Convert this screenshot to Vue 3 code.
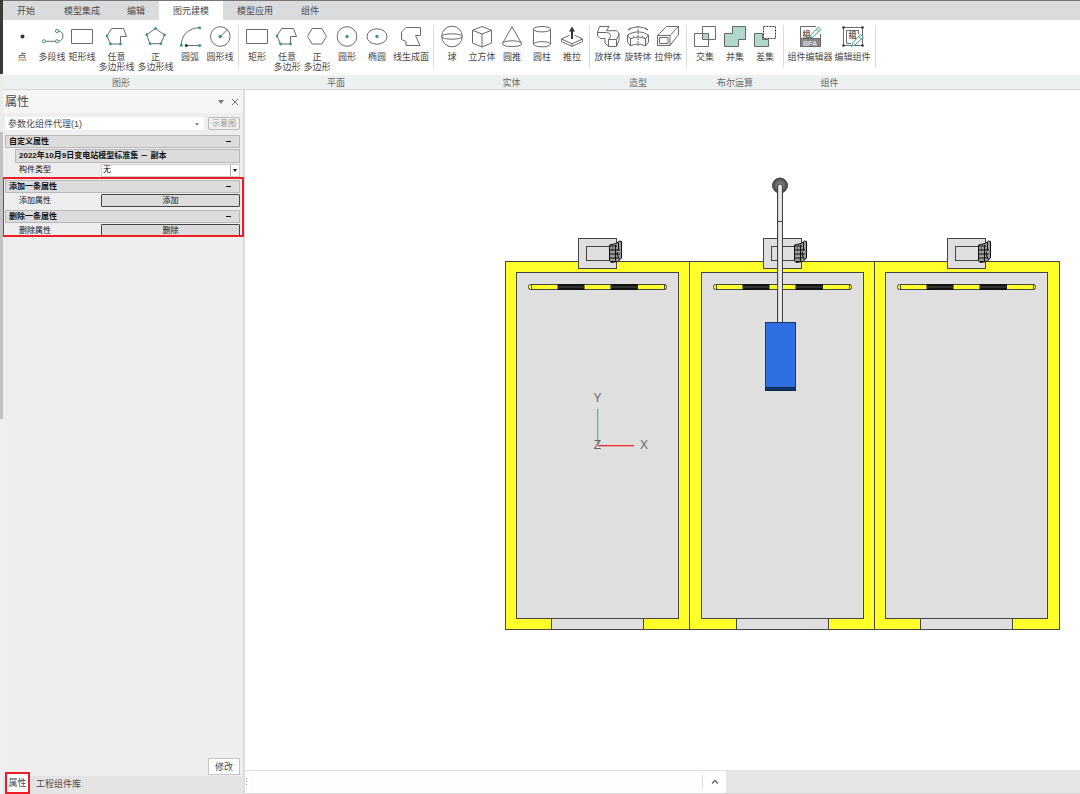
<script setup>
import { ref } from 'vue'

const menus = ['开始', '模型集成', '编辑', '图元建模', '模型应用', '组件']
const activeMenu = ref('图元建模')

const anyPolygon =
  '<path d="M2 11 6.5 3.5H18.5L21.5 11.5H15.5V19H5.5Z"/><g class="dot"><circle cx="2" cy="11" r="1.4"/><circle cx="5.5" cy="19" r="1.4"/><circle cx="15.5" cy="19" r="1.4"/></g>'
const rectangle = '<path d="M1.5 4.5H22.5V18.5H1.5Z"/>'

const groups = [
  {
    name: '图形',
    tools: [
      { label: ['点'], icon: '<circle class="ink" cx="12.5" cy="11.5" r="2"/>' },
      {
        label: ['多段线'],
        icon: '<path d="M5.5 16.3H15.5M18.5 6C24.5 6.5 24.5 15.5 18.5 16.3"/><g class="ring"><circle cx="4" cy="16.3" r="1.6"/><circle cx="17" cy="16.3" r="1.6"/><circle cx="17" cy="6" r="1.6"/></g>'
      },
      { label: ['矩形线'], icon: rectangle },
      { label: ['任意', '多边形线'], size: 'wide', icon: anyPolygon },
      {
        label: ['正', '多边形线'],
        size: 'wide',
        icon: '<path d="M11.5 3.5 20.5 10 16.8 18.7H6L2.7 9.7Z"/><g class="dot"><circle cx="11.5" cy="3.5" r="1.4"/><circle cx="20.5" cy="10" r="1.4"/><circle cx="16.8" cy="18.7" r="1.4"/><circle cx="6" cy="18.7" r="1.4"/><circle cx="2.7" cy="9.7" r="1.4"/></g>'
      },
      {
        label: ['圆弧'],
        icon: '<path d="M3.3 20.3C3.3 10 11 2.7 21.7 2.7M8.3 20.5H21.7"/><g class="dot"><circle cx="3.3" cy="20.3" r="1.5"/><circle cx="21.7" cy="2.7" r="1.5"/><circle cx="21.7" cy="20.5" r="1.5"/></g><circle class="ink" cx="8.3" cy="20.5" r="1.5"/>'
      },
      {
        label: ['圆形线'],
        icon: '<circle cx="12.3" cy="11.5" r="9.8"/><path d="M12.3 11.5 19.3 4.5"/><circle class="dot" cx="12.3" cy="11.5" r="1.8"/>'
      }
    ]
  },
  {
    name: '平面',
    tools: [
      { label: ['矩形'], icon: rectangle },
      { label: ['任意', '多边形'], icon: anyPolygon },
      { label: ['正', '多边形'], icon: '<path d="M2.5 11.5 7.2 3.5H16.8L21.5 11.5 16.8 19H7.2Z"/>' },
      { label: ['圆形'], icon: '<circle cx="12" cy="11.5" r="9.8"/><circle class="dot" cx="12" cy="11.5" r="1.7"/>' },
      { label: ['椭圆'], icon: '<ellipse cx="12" cy="11.5" rx="10" ry="7.7"/><circle class="dot" cx="12" cy="11.5" r="1.7"/>' },
      {
        label: ['线生成面'],
        size: 'medium',
        icon: '<path d="M2.5 7 7 2.5H21.5V10.5H16.5L21 20.5H7V16.5L2.5 14.5Z"/>'
      }
    ]
  },
  {
    name: '实体',
    snug: true,
    tools: [
      { label: ['球'], icon: '<circle cx="12" cy="11.5" r="10.3"/><ellipse cx="12" cy="11.5" rx="10.3" ry="2.7"/>' },
      { label: ['立方体'], icon: '<path d="M12 1.5 21.5 5.3V18L12 22 2.5 18V5.3ZM2.5 5.3 12 9 21.5 5.3M12 9V22"/>' },
      { label: ['圆推'], icon: '<path d="M2.5 18.5 12 1.7 21.5 18.5"/><ellipse cx="12" cy="18.7" rx="9.7" ry="2.9"/>' },
      {
        label: ['圆柱'],
        icon: '<ellipse cx="12" cy="4.2" rx="8.5" ry="2.7"/><path d="M3.5 4.2V19.2C4.5 22.7 19.5 22.7 20.5 19.2V4.2"/><path d="M3.5 19.2C4.5 15.8 19.5 15.8 20.5 19.2"/>'
      },
      {
        label: ['推拉'],
        icon: '<path d="M9.5 10.2 1.5 14 12 18.7 22.5 14 14.5 10.2M1.5 14V16.5L12 21.3 22.5 16.5V14M12 18.7V21.3"/><path class="bold" d="M12 14V4"/><path class="ink" d="M9 6.5 12 1.5 15 6.5Z"/>'
      }
    ]
  },
  {
    name: '造型',
    tools: [
      {
        label: ['放样体'],
        icon: '<path d="M3.5 1.5H13L10.5 5.7H20.5L23 8V15.5L20.5 21.5H12.5L9 18V13.5H4L1.5 11V7.5ZM1.5 7.5H10.5Q14.500 8 14.500 10.500T12.500 14.500V21.500M12.500 14.500H20.500V21.500M20.500 14.500 23 9"/>'
      },
      {
        label: ['旋转体'],
        icon: '<path d="M2 5Q12-1.5 22 5M19.5 2.5 22 5M4.5 2.5 2 5M1.5 10Q12 3.5 22.5 10L19.5 14Q12 10 4.5 14ZM1.5 10V17L4.5 21Q12 17 19.5 21L22.5 17V10M4.5 14V21M19.5 14V21"/><path class="dash" d="M12 1V22M4.5 14 8 11M19.5 14 16 11"/>'
      },
      {
        label: ['拉伸体'],
        icon: '<path d="M1.5 10.5 10.5 1.5H22.5V9.5L14 20.5H1.5ZM1.5 10.5H14V20.5M14 10.5 22.5 1.5M3.5 12.5H12V18.5H3.5Z"/>'
      }
    ]
  },
  {
    name: '布尔运算',
    tools: [
      { label: ['交集'], icon: '<path class="mint" d="M9.5 8.5H15.5V14.5H9.5Z"/><path d="M1.5 8.5H15.5V21.5H1.5ZM9.5 1.5H22.5V14.5H9.5Z"/>' },
      { label: ['并集'], icon: '<path class="mint line" d="M9.5 1.5H22.5V14.5H15.5V21.5H1.5V8.5H9.5Z"/>' },
      { label: ['差集'], icon: '<path class="mint line" d="M1.5 8.5H9.5V14.5H15.5V21.5H1.5Z"/><path class="dotted" d="M10.5 1.5H22.5V13.5H10.5Z"/>' }
    ]
  },
  {
    name: '组件',
    tools: [
      {
        label: ['组件编辑器'],
        size: 'widest',
        icon: '<path d="M18 1.5H2.5V21.5H22.5V9"/><path class="slab" d="M2.5 13.5H22.5V21.5H2.5Z"/><text class="zh" x="4.5" y="12">组</text><text class="bfa" x="5" y="20.5">BFA</text><path class="pen" d="M20.5 2 23 4.5 15 12 12 13 13 9.8ZM18.5 4 21 6.5"/>'
      },
      {
        label: ['编辑组件'],
        size: 'wide',
        icon: '<path d="M2.5 2.5H21.5V20.5H2.5ZM5.5 5.5H17.5V9M10 18.5H5.5V5.5"/><g class="ink"><circle cx="2.5" cy="2.5" r="1.3"/><circle cx="21.5" cy="2.5" r="1.3"/><circle cx="2.5" cy="20.5" r="1.3"/><circle cx="21.5" cy="20.5" r="1.3"/></g><text class="zh" x="7.5" y="13">组</text><path class="pen" d="M19.5 9.5 22.5 12 14 20 10.5 21.5 12 17.5ZM17.5 11.5 20.5 14"/>'
      }
    ]
  }
]

const bays = [0, 185, 369]
const command = ref('')
</script>

<template>
  <div class="app">
    <div class="edge"></div>
    <header class="ribbon">
      <nav class="menu">
        <button v-for="m in menus" :key="m" type="button" :class="{ active: m === activeMenu }" @click="activeMenu = m">{{ m }}</button>
      </nav>
      <div class="groups">
        <section v-for="g in groups" :key="g.name" class="group" :class="{ snug: g.snug }">
          <div class="tools">
            <button v-for="t in g.tools" :key="t.label.join('')" type="button" class="tool" :class="t.size">
              <svg width="24" height="24" viewBox="0 0 24 24" aria-hidden="true"><g v-html="t.icon"></g></svg>
              <span v-for="l in t.label" :key="l">{{ l }}</span>
            </button>
          </div>
          <h2>{{ g.name }}</h2>
        </section>
      </div>
    </header>

    <main class="work">
      <aside class="panel">
        <div class="title">
          <h1>属性</h1>
          <button type="button" aria-label="选项"><svg width="8" height="6" viewBox="0 0 8 6"><path d="M1 1H7L4 5Z" fill="#777" /></svg></button>
          <button type="button" aria-label="关闭"><svg width="8" height="8" viewBox="0 0 8 8"><path d="M1 1 7 7M7 1 1 7" stroke="#777" fill="none" /></svg></button>
        </div>

        <div class="picker">
          <div class="select">
            <select aria-label="对象"><option>参数化组件代理(1)</option></select>
            <svg width="6" height="4" viewBox="0 0 6 4"><path d="M1 0H5L3 3Z" fill="#888" /></svg>
          </div>
          <button type="button" disabled>示意图</button>
        </div>

        <div class="props">
          <h3>自定义属性<i></i></h3>
          <h4>2022年10月9日变电站模型标准集 － 副本</h4>
          <div class="row">
            <label for="kind">构件类型</label>
            <div class="select boxed">
              <select id="kind"><option>无</option></select>
              <svg width="6" height="4" viewBox="0 0 6 4"><path d="M1 0H5L3 3Z" fill="#111" /></svg>
            </div>
          </div>
          <div class="marked">
            <h3>添加一条属性<i></i></h3>
            <div class="row">
              <label for="add">添加属性</label>
              <button id="add" type="button">添加</button>
            </div>
            <h3>删除一条属性<i></i></h3>
            <div class="row">
              <label for="del">删除属性</label>
              <button id="del" type="button">删除</button>
            </div>
          </div>
        </div>

        <div class="apply"><button type="button">修改</button></div>
        <nav class="docks">
          <button type="button" class="active">属性</button>
          <button type="button">工程组件库</button>
        </nav>
      </aside>

      <section class="stage">
        <svg class="scene" viewBox="245 90 835 680" preserveAspectRatio="xMidYMin meet" role="img" aria-label="模型俯视图">
          <defs>
            <linearGradient id="pole"><stop offset="0" stop-color="#bbb" /><stop offset=".5" stop-color="#f4f4f4" /><stop offset="1" stop-color="#ccc" /></linearGradient>
            <radialGradient id="ball"><stop offset="0" stop-color="#999" /><stop offset="1" stop-color="#444" /></radialGradient>
          </defs>
          <g class="solid">
            <rect class="yellow" x="505.5" y="261.5" width="554" height="368" />
            <path d="M689.5 261V629M874.5 261V629" />
            <g v-for="dx in bays" :key="dx" :transform="`translate(${dx} 0)`">
              <rect class="grey" x="516.5" y="272.5" width="162" height="346" />
              <rect class="grey" x="551.5" y="618.5" width="92" height="11" />
              <rect class="yellow" x="528.5" y="284.5" width="138" height="5" rx="2" />
              <path class="black" d="M558 284.5H584V289.5H558ZM611 284.5H637.5V289.5H611Z" />
              <path class="shine" d="M558 287H584M611 287H637.5" />
              <path d="M531.5 284V290M664.5 284V290" />
              <rect class="grey" x="578.5" y="238.5" width="38" height="30" />
              <rect class="grey" x="586.5" y="246.5" width="23" height="14" />
              <path class="steel" d="M609.5 245 616 243.5 619.5 241 621.5 241.5V258L618 261.5 611 262.5 609.5 260.5Z" />
              <path class="gear" d="M610 246H617M609 250H620M609 254H620M610 258H618M612.5 247V250M615.5 245V261M618.5 242.5V249L617 254 619.5 260M611 261.5H616" />
              <path class="glint" d="M610.5 248H614M617 251.5H619.5M611 256.5H614M620 244V247M617 259.5H618.5" />
            </g>
            <circle cx="780" cy="185.5" r="7.5" fill="url(#ball)" />
            <path d="M777.5 323V187Q777.5 184 780 184Q782.5 184 782.5 187V323Z" fill="url(#pole)" />
            <path d="M777.5 221.5H782.5" />
            <rect class="blue" x="765.5" y="322.5" width="30" height="68" />
            <rect class="navy" x="765.5" y="387.5" width="30" height="3" />
          </g>
          <rect class="axis-y" x="597" y="409" width="1.3" height="36" />
          <rect class="axis-x" x="598" y="445" width="36" height="1.3" />
          <g class="axis">
            <text x="597.5" y="402">Y</text>
            <text x="597.5" y="449">Z</text>
            <text x="644" y="449">X</text>
          </g>
        </svg>
        <div class="status">
          <div class="command">
            <span class="grip"></span>
            <input v-model="command" type="text" aria-label="命令" />
            <button type="button" aria-label="展开"><svg width="8" height="6" viewBox="0 0 8 6"><path d="M1 4.5 4 1.5 7 4.5" stroke="#666" stroke-width="1.4" fill="none" /></svg></button>
          </div>
        </div>
      </section>
    </main>
  </div>
</template>

<style>
body {
  margin: 0;
  overflow: hidden;
}
</style>

<style scoped>
.app {
  position: relative;
  display: flex;
  flex-direction: column;
  height: 100vh;
  box-sizing: border-box;
  padding-left: 3px;
  background: #f0f0f0;
  color: #4a4a4a;
  font: 9px/10px "Liberation Sans", "Noto Sans CJK SC", sans-serif;
}
.app * {
  box-sizing: border-box;
}
h1, h2, h3, h4 {
  margin: 0;
  font-weight: 400;
}
button, select, input {
  margin: 0;
  padding: 0;
  border: 0;
  border-radius: 0;
  background: none;
  color: inherit;
  font: inherit;
}
svg {
  display: block;
}
.edge {
  position: absolute;
  left: 0;
  top: 0;
  bottom: 0;
  width: 3px;
  background: linear-gradient(#3a3a3a 74px, #ececec 74px 132px, #c2c2c2 132px 419px, #f0f0f0 419px);
}

.ribbon {
  flex: none;
  border-bottom: 1px solid #d5d7d7;
  background: #edf1f1;
}
.menu {
  display: flex;
  height: 20px;
  border-top: 1px solid #777779;
  background: #dadbdd;
}
.menu button {
  padding: 0 14px;
}
.menu button:nth-child(2) {
  padding: 0 13px 0 15px;
}
.menu button.active {
  background: #fff;
}
.groups {
  display: flex;
  padding-left: 1px;
  background: linear-gradient(#fff 55px, #edf1f1 55px);
}
.tools {
  display: flex;
  height: 55px;
  padding: 5px 4px 0 3px;
  background: linear-gradient(#dcdcdc, #dcdcdc) right 5px / 1px 43px no-repeat;
}
.snug .tools {
  padding-right: 3px;
}
.group h2 {
  height: 14px;
  padding-right: 1px;
  font-size: 9px;
  line-height: 16px;
  text-align: center;
  color: #666;
}
.tool {
  display: flex;
  flex: none;
  flex-direction: column;
  align-items: center;
  width: 30px;
  white-space: nowrap;
}
.tool.medium {
  width: 38px;
}
.tool.wide {
  width: 39px;
}
.tool.widest {
  width: 46px;
}
.tool svg {
  margin-bottom: 3px;
  overflow: visible;
}
.tool svg,
.tool :deep(.line) {
  fill: none;
  stroke: #6a6a6a;
  stroke-width: 1;
}
.tool :deep(.dot) {
  fill: #3a9c88;
  stroke: none;
}
.tool :deep(.ring) {
  fill: #fff;
  stroke: #3a9c88;
}
.tool :deep(.ink) {
  fill: #333;
  stroke: none;
}
.tool :deep(.bold) {
  stroke: #333;
  stroke-width: 2;
}
.tool :deep(.dash) {
  stroke-dasharray: 2 1;
}
.tool :deep(.dotted) {
  stroke: #333;
  stroke-dasharray: 2 1;
}
.tool :deep(.mint) {
  fill: #b0d8ce;
  stroke: none;
}
.tool :deep(.mint.line) {
  stroke: #666;
}
.tool :deep(.slab) {
  fill: #888;
}
.tool :deep(.pen) {
  fill: #fff;
  stroke: #3a9c88;
}
.tool :deep(text) {
  stroke: none;
  fill: #555;
  font-size: 8px;
  font-weight: 700;
}
.tool :deep(.bfa) {
  fill: #ddd;
  font-size: 7px;
}

.work {
  display: flex;
  flex: 1;
  min-height: 0;
}
.panel {
  display: flex;
  flex: none;
  flex-direction: column;
  width: 242px;
  border-right: 2px solid #dcdcdc;
  background: #eee;
}
.title {
  display: flex;
  align-items: center;
  gap: 6px;
  height: 23px;
  padding: 0 4px 0 2px;
  background: #f5f5f5;
}
.title h1 {
  flex: 1;
  font-size: 12px;
  line-height: 16px;
}
.picker {
  display: flex;
  gap: 4px;
  padding: 4px 3px 5px 2px;
}
.picker button {
  width: 32px;
  height: 13px;
  border: 1px solid #bbb;
  border-radius: 2px;
  color: #999;
  font-size: 8px;
}
.select {
  position: relative;
  flex: 1;
  min-width: 0;
  background: #fff;
}
.select select {
  display: block;
  width: 100%;
  height: 13px;
  padding-left: 3px;
  appearance: none;
}
.select svg {
  position: absolute;
  right: 4px;
  top: 6px;
  pointer-events: none;
}
.props {
  padding: 0 3px 0 2px;
  color: #111;
  font-size: 8px;
}
.props h3,
.props h4 {
  display: flex;
  align-items: center;
  justify-content: space-between;
  height: 13px;
  padding: 0 8px 0 3px;
  border: 1px solid #b8b8b8;
  background: #dcdcdc;
  font-size: 8px;
  font-weight: 700;
}
.props h4 {
  height: 14px;
  margin: 1px 0 0 10px;
}
.props h3 i {
  width: 5px;
  height: 1px;
  background: #111;
}
.row {
  display: flex;
  align-items: center;
  height: 14px;
  margin-left: 10px;
}
.row label {
  flex: none;
  width: 86px;
  padding-left: 4px;
}
.row button {
  flex: 1;
  height: 13px;
  border: 1px solid #444;
  border-radius: 1px;
  background: #dcdcdc;
}
.row .boxed {
  border: 1px solid #ccc;
}
.row .boxed select {
  height: 11px;
  padding-left: 1px;
}
.row .boxed svg {
  right: 1px;
  top: 4px;
}
.row .boxed::after {
  content: "";
  position: absolute;
  top: 0;
  right: 8px;
  bottom: 0;
  width: 1px;
  background: #aaa;
}
.marked {
  height: 60px;
  margin: 0 -4px 0 -3px;
  padding: 1px 2px 0 1px;
  border: 2px solid #ee1c25;
  overflow: hidden;
}
.marked .row {
  height: 17px;
  padding-bottom: 2px;
}
.apply {
  display: flex;
  justify-content: flex-end;
  margin-top: auto;
  padding: 0 3px 1px;
}
.apply button {
  width: 32px;
  height: 17px;
  border: 1px solid #c4c4c4;
  background: #fff;
}
.docks {
  display: flex;
  gap: 6px;
  height: 18px;
  padding-left: 2px;
  background: #e4e4e4;
}
.docks button {
  height: 16px;
}
.docks .active {
  width: 25px;
  height: 22px;
  margin-top: -4px;
  border: 2px solid #ee1c25;
  background: #fff;
}

.stage {
  display: flex;
  flex: 1;
  flex-direction: column;
  min-width: 0;
  background: #fff;
}
.scene {
  flex: 1;
  width: 100%;
  min-height: 0;
}
.solid {
  fill: none;
  stroke: #444;
  stroke-width: 1;
}
.yellow { fill: #ffff2a; }
.grey { fill: #dfdfdf; }
.black { fill: #111; stroke: #111; }
.shine { stroke: #555; }
.glint { stroke: #aaa; }
.steel { fill: #999; stroke: #111; }
.gear { stroke: #111; }
.blue { fill: #2e70e2; stroke: #1b3866; }
.navy { fill: #17376f; stroke: #10264d; }
.axis-x { fill: #f02a2a; }
.axis-y { fill: #35c9a0; }
.axis {
  fill: #666;
  font-size: 12px;
  text-anchor: middle;
}
.status {
  display: flex;
  flex: none;
  height: 24px;
  border-top: 1px solid #ddd;
  border-bottom: 1px solid #d4d4d4;
  background: #e5e5e5;
}
.command {
  display: flex;
  align-items: center;
  width: 481px;
  border-radius: 0 2px 2px 0;
  background: #fff;
}
.command input {
  flex: 1;
  height: 18px;
  outline: 0;
  background: #fdfdfd;
}
.command button {
  display: flex;
  align-items: center;
  justify-content: center;
  width: 24px;
  height: 14px;
  border-left: 1px solid #ddd;
}
.grip {
  width: 1px;
  height: 9px;
  margin: 0 3px 0 1px;
  background: repeating-linear-gradient(#999 0 1px, transparent 1px 3px);
}
</style>
